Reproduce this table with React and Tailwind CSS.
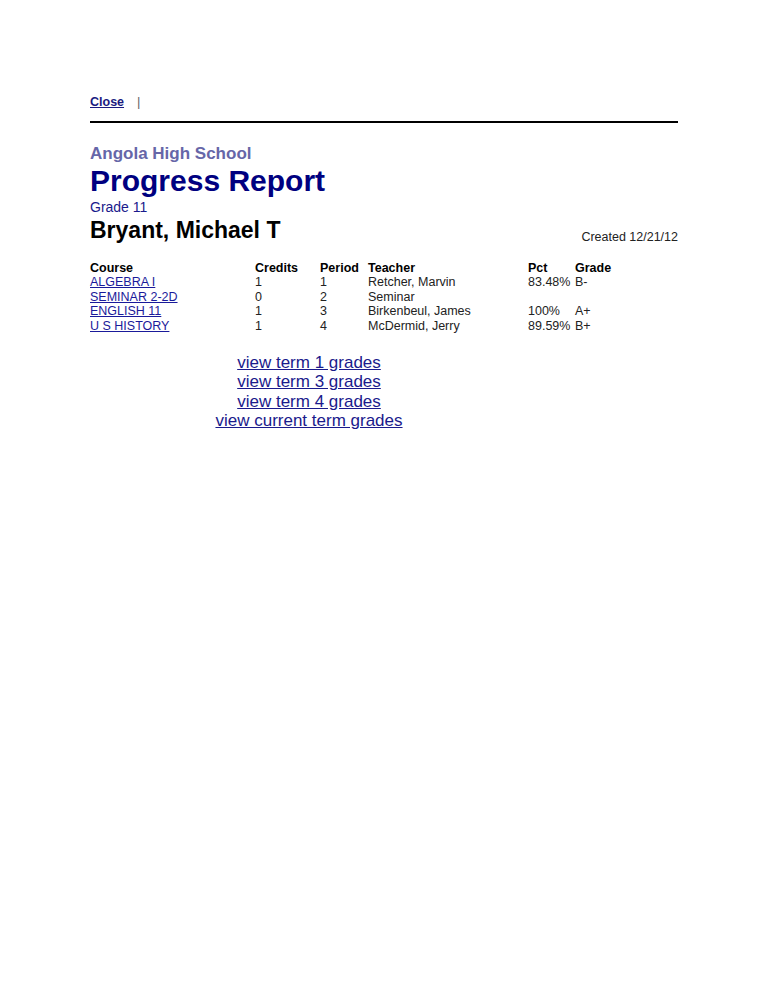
export default function App() {
  const rows = [
    { course: "ALGEBRA I", credits: "1", period: "1", teacher: "Retcher, Marvin", pct: "83.48%", grade: "B-" },
    { course: "SEMINAR 2-2D", credits: "0", period: "2", teacher: "Seminar", pct: "", grade: "" },
    { course: "ENGLISH 11", credits: "1", period: "3", teacher: "Birkenbeul, James", pct: "100%", grade: "A+" },
    { course: "U S HISTORY", credits: "1", period: "4", teacher: "McDermid, Jerry", pct: "89.59%", grade: "B+" },
  ];
  const terms = ["view term 1 grades", "view term 3 grades", "view term 4 grades", "view current term grades"];

  return (
    <div className="min-h-[994px] bg-white font-['Liberation_Sans',Arial,sans-serif] text-black">
      <div className="ml-[90px] w-[588px] pt-[93px]">
        <div className="flex items-center h-[18px]">
          <a href="#" className="text-[12.5px] font-bold text-[#1a1a80] underline">Close</a>
          <span className="ml-[13px] text-[13px] text-[#666]">|</span>
        </div>
        <div className="mt-[10px] h-[2px] bg-black" />

        <div className="mt-[21px] text-[17px] leading-[19px] font-bold text-[#6666a8]">Angola High School</div>
        <div className="text-[30px] leading-[36px] font-bold text-[#000080]">Progress Report</div>
        <div className="text-[14px] leading-[17px] text-[#1a1a8c]">Grade 11</div>
        <div className="flex items-end justify-between mt-[1px]">
          <div className="text-[23px] leading-[27px] font-bold">Bryant, Michael T</div>
          <div className="text-[12.5px] leading-[16px] mb-[-1px] text-[#222]">Created 12/21/12</div>
        </div>

        <div className="mt-[17px] text-[12.5px] leading-[14.4px]">
          <div className="flex font-bold">
            <div className="w-[165px]">Course</div>
            <div className="w-[65px]">Credits</div>
            <div className="w-[48px]">Period</div>
            <div className="w-[160px]">Teacher</div>
            <div className="w-[47px]">Pct</div>
            <div>Grade</div>
          </div>
          {rows.map((r) => (
            <div key={r.course} className="flex text-[#222]">
              <div className="w-[165px]">
                <a href="#" className="text-[#1a1a9a] underline">{r.course}</a>
              </div>
              <div className="w-[65px]">{r.credits}</div>
              <div className="w-[48px]">{r.period}</div>
              <div className="w-[160px]">{r.teacher}</div>
              <div className="w-[47px]">{r.pct}</div>
              <div>{r.grade}</div>
            </div>
          ))}
        </div>

        <div className="mt-[20px] w-[438px] flex flex-col items-center text-[17px] leading-[19.4px]">
          {terms.map((t) => (
            <a key={t} href="#" className="text-[#1a1a8c] underline">{t}</a>
          ))}
        </div>
      </div>
    </div>
  );
}
